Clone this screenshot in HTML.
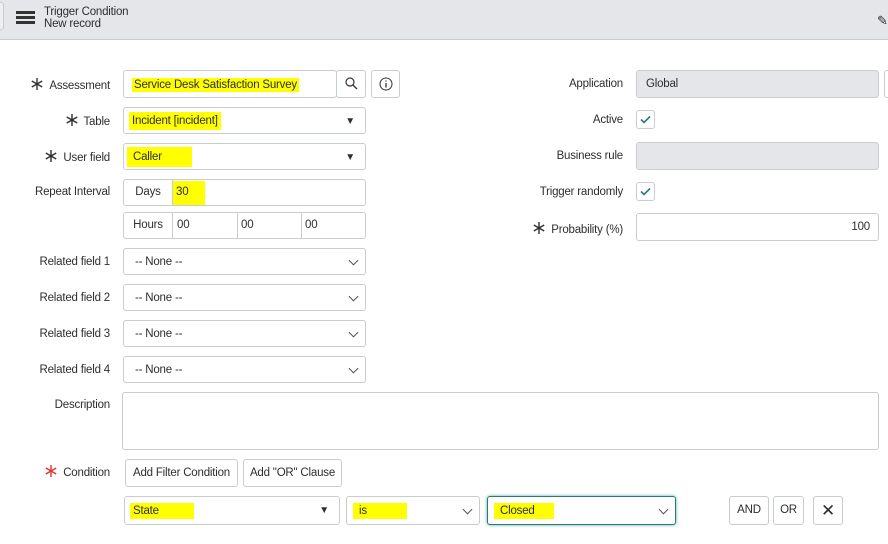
<!DOCTYPE html>
<html><head><meta charset="utf-8"><style>
body{margin:0;width:888px;height:544px;position:relative;background:#fff;font-family:"Liberation Sans",sans-serif;font-size:11.5px;color:#2e2e2e;overflow:hidden;letter-spacing:-0.2px}
.a{position:absolute;box-sizing:border-box}
.b{border:1px solid #c9ccd0;border-radius:3px;background:#fff}
.l{position:absolute;text-align:right;width:110px;left:0}
.r{position:absolute;text-align:right;width:200px;left:423px}
.hl{background:#ffff00}
.g{background:#e4e6e9}
.ck{width:19px;height:19px;border:1px solid #c9ccd0;border-radius:3px;text-align:center}
.tri{position:absolute;right:10px;top:8px;font-size:10px}
.chev{position:absolute;right:8px;top:8px;width:6px;height:6px;border-right:1.3px solid #555;border-bottom:1.3px solid #555;transform:rotate(45deg)}
.btn{border:1px solid #c9ccd0;border-radius:3px;background:#fff;text-align:center}
.s{display:inline-block;vertical-align:-1px;margin-right:6px}
</style></head><body>
<svg width="0" height="0" style="position:absolute"><defs><symbol id="ast" viewBox="0 0 12 12"><path d="M6 0v12M0.8 3l10.4 6M0.8 9l10.4-6" stroke="currentColor" stroke-width="1.4"/></symbol></defs></svg>
<div class="a g" style="left:0;top:0;width:888px;height:40px;border-bottom:1px solid #c8cbcf"></div>
<div class="a" style="left:-4px;top:2px;width:8px;height:28px;border:1px solid #c9ccd0;border-radius:3px;background:#eee"></div>
<div class="a" style="left:16px;top:11px;width:19px;height:3px;background:#333;box-shadow:0 5px 0 #333,0 10px 0 #333"></div>
<div class="a" style="left:44px;top:6px;font-size:11.5px;line-height:12px">Trigger Condition<br>New record</div>
<div class="a" style="left:877px;top:13px;font-size:13px">✎</div>

<div class="l" style="top:78px"><svg class="s" width="12" height="12" style="color:#333"><use href="#ast"/></svg>Assessment</div>
<div class="a b" style="left:123px;top:70px;width:214px;height:28px"><span class="a hl" style="left:8px;top:7px;padding:0 2px;line-height:14px">Service Desk Satisfaction Survey</span></div>
<div class="a b" style="left:336px;top:70px;width:30px;height:28px;text-align:center;line-height:26px">
<svg width="13" height="13" viewBox="0 0 13 13" style="vertical-align:middle"><circle cx="5" cy="5" r="4" fill="none" stroke="#333" stroke-width="1.2"/><path d="M8 8l4 4" stroke="#333" stroke-width="1.3"/></svg></div>
<div class="a b" style="left:371px;top:70px;width:29px;height:28px;text-align:center;line-height:26px">
<svg width="14" height="14" viewBox="0 0 14 14" style="vertical-align:middle"><circle cx="7" cy="7" r="6" fill="none" stroke="#333"/><path d="M7 6v4.5M7 3.5v1" stroke="#333" stroke-width="1.3"/></svg></div>

<div class="l" style="top:114px"><svg class="s" width="12" height="12"><use href="#ast"/></svg>Table</div>
<div class="a b" style="left:123px;top:107px;width:243px;height:27px"><span class="a hl" style="left:5px;top:4px;padding:0 3px;line-height:18px">Incident [incident]</span><span class="tri">▼</span></div>
<div class="l" style="top:150px"><svg class="s" width="12" height="12"><use href="#ast"/></svg>User field</div>
<div class="a b" style="left:123px;top:143px;width:243px;height:27px"><span class="a hl" style="left:3px;top:3px;padding:0 30px 0 6px;line-height:20px">Caller</span><span class="tri">▼</span></div>

<div class="l" style="top:186px">Repeat Interval</div>
<div class="a b" style="left:123px;top:179px;width:243px;height:27px"></div>
<div class="a" style="left:123px;top:186px;width:50px;text-align:center">Days</div>
<div class="a" style="left:172px;top:179px;width:1px;height:27px;background:#c9ccd0"></div>
<div class="a hl" style="left:173px;top:181px;width:32px;height:24px;padding:5px 3px">30</div>
<div class="a b" style="left:123px;top:212px;width:243px;height:27px"></div>
<div class="a" style="left:123px;top:219px;width:50px;text-align:center">Hours</div>
<div class="a" style="left:172px;top:212px;width:1px;height:27px;background:#c9ccd0"></div>
<div class="a" style="left:237px;top:212px;width:1px;height:27px;background:#c9ccd0"></div>
<div class="a" style="left:301px;top:212px;width:1px;height:27px;background:#c9ccd0"></div>
<div class="a" style="left:177px;top:219px">00</div><div class="a" style="left:241px;top:219px">00</div><div class="a" style="left:305px;top:219px">00</div>

<div class="l" style="top:256px">Related field 1</div>
<div class="a b" style="left:123px;top:248px;width:243px;height:27px;padding:7px 11px">-- None --<span class="chev"></span></div>
<div class="l" style="top:292px">Related field 2</div>
<div class="a b" style="left:123px;top:284px;width:243px;height:27px;padding:7px 11px">-- None --<span class="chev"></span></div>
<div class="l" style="top:328px">Related field 3</div>
<div class="a b" style="left:123px;top:320px;width:243px;height:27px;padding:7px 11px">-- None --<span class="chev"></span></div>
<div class="l" style="top:364px">Related field 4</div>
<div class="a b" style="left:123px;top:356px;width:243px;height:27px;padding:7px 11px">-- None --<span class="chev"></span></div>

<div class="l" style="top:399px">Description</div>
<div class="a b" style="left:122px;top:392px;width:757px;height:58px"></div>

<div class="l" style="top:465px"><svg class="s" width="12" height="12" style="color:#d33"><use href="#ast"/></svg>Condition</div>
<div class="a btn" style="left:125px;top:459px;width:113px;height:28px;line-height:26px">Add Filter Condition</div>
<div class="a btn" style="left:243px;top:459px;width:99px;height:28px;line-height:26px">Add "OR" Clause</div>

<div class="a b" style="left:124px;top:496px;width:216px;height:29px"><span class="a hl" style="left:5px;top:6px;width:64px;padding:0 3px;line-height:16px">State</span><span class="tri" style="top:8px">▼</span></div>
<div class="a b" style="left:346px;top:496px;width:134px;height:29px"><span class="a hl" style="left:6px;top:6px;width:54px;padding:0 6px;line-height:16px">is</span><span class="chev" style="top:9px"></span></div>
<div class="a b" style="left:487px;top:496px;width:189px;height:29px;border-color:#2b7a78;box-shadow:0 0 3px #5aa"><span class="a hl" style="left:6px;top:6px;width:60px;padding:0 6px;line-height:16px">Closed</span><span class="chev" style="top:9px"></span></div>
<div class="a btn" style="left:729px;top:496px;width:40px;height:29px;line-height:27px">AND</div>
<div class="a btn" style="left:773px;top:496px;width:31px;height:29px;line-height:27px">OR</div>
<div class="a btn" style="left:813px;top:496px;width:30px;height:29px;line-height:27px;font-size:17px">✕</div>

<div class="r" style="top:78px">Application</div>
<div class="a b g" style="left:636px;top:70px;width:243px;height:28px;padding:7px 9px">Global</div>
<div class="a b" style="left:884px;top:70px;width:10px;height:28px"></div>
<div class="r" style="top:114px">Active</div>
<div class="a ck" style="left:636px;top:110px"><svg width="17" height="17" viewBox="0 0 17 17"><path d="M4 8.5l3 3 6-6" fill="none" stroke="#2b7a78" stroke-width="1.6"/></svg></div>
<div class="r" style="top:150px">Business rule</div>
<div class="a b g" style="left:636px;top:142px;width:243px;height:28px"></div>
<div class="r" style="top:186px">Trigger randomly</div>
<div class="a ck" style="left:636px;top:182px"><svg width="17" height="17" viewBox="0 0 17 17"><path d="M4 8.5l3 3 6-6" fill="none" stroke="#2b7a78" stroke-width="1.6"/></svg></div>
<div class="r" style="top:222px"><svg class="s" width="12" height="12"><use href="#ast"/></svg>Probability (%)</div>
<div class="a b" style="left:636px;top:213px;width:243px;height:28px;text-align:right;padding:7px 8px">100</div>
</body></html>
